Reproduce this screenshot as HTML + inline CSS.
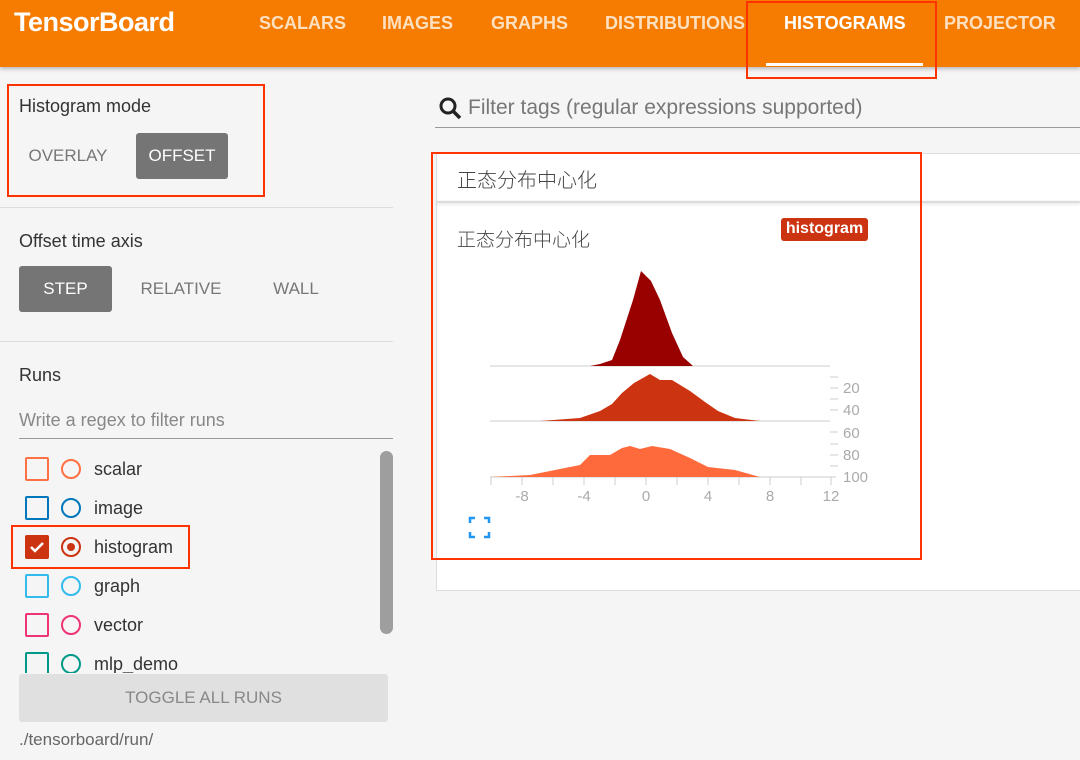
<!DOCTYPE html>
<html><head><meta charset="utf-8"><style>
*{margin:0;padding:0;box-sizing:border-box}
body{width:1080px;height:760px;background:#f5f5f5;font-family:"Liberation Sans","Noto Sans CJK SC",sans-serif;position:relative;overflow:hidden;color:#333}
.a{position:absolute;white-space:nowrap}
.hdr{left:0;top:0;width:1080px;height:67px;background:#f57c00;box-shadow:0 2px 4px rgba(0,0,0,.25)}
.nav{top:13px;font-size:18px;font-weight:bold;color:#fde0c0}
.red{position:absolute;border:2px solid #ff3300}
.line{position:absolute;height:1px;background:#ddd}
.btn{position:absolute;height:46px;border-radius:3px;font-size:17px;line-height:46px;text-align:center;color:#777}
.btn.on{background:#757575;color:#fff}
.run{position:absolute;left:25px;width:300px;height:24px;font-size:18px;color:#333}
.run .cb{position:absolute;left:0;top:0;width:24px;height:24px;border:2px solid;border-radius:2px}
.run .rd{position:absolute;left:36px;top:2px;width:20px;height:20px;border:2px solid;border-radius:50%}
.run span{position:absolute;left:69px;top:0;line-height:24px}
</style></head><body>
<div class="a hdr"></div>
<div class="a" style="left:14px;top:7px;font-size:27px;color:#fff;font-weight:bold;letter-spacing:-0.5px">TensorBoard</div>
<div class="a nav" style="left:259px">SCALARS</div>
<div class="a nav" style="left:382px">IMAGES</div>
<div class="a nav" style="left:491px">GRAPHS</div>
<div class="a nav" style="left:605px">DISTRIBUTIONS</div>
<div class="a nav" style="left:784px;color:#fff">HISTOGRAMS</div>
<div class="a nav" style="left:944px">PROJECTOR</div>
<div class="a" style="left:766px;top:63px;width:157px;height:3px;background:#fff"></div>
<div class="red" style="left:746px;top:1px;width:191px;height:78px"></div>

<div class="a" style="left:19px;top:96px;font-size:18px">Histogram mode</div>
<div class="btn" style="left:19px;top:133px;width:98px">OVERLAY</div>
<div class="btn on" style="left:136px;top:133px;width:92px">OFFSET</div>
<div class="red" style="left:7px;top:84px;width:258px;height:113px"></div>
<div class="line" style="left:0;top:207px;width:393px"></div>
<div class="a" style="left:19px;top:231px;font-size:18px">Offset time axis</div>
<div class="btn on" style="left:19px;top:266px;width:93px">STEP</div>
<div class="btn" style="left:132px;top:266px;width:98px">RELATIVE</div>
<div class="btn" style="left:260px;top:266px;width:72px">WALL</div>
<div class="line" style="left:0;top:341px;width:393px"></div>
<div class="a" style="left:19px;top:365px;font-size:18px">Runs</div>
<div class="a" style="left:19px;top:410px;font-size:18px;color:#888">Write a regex to filter runs</div>
<div class="a" style="left:19px;top:438px;width:374px;height:1px;background:#999"></div>

<div class="run" style="top:457px"><div class="cb" style="border-color:#ff7043"></div><div class="rd" style="border-color:#ff7043"></div><span>scalar</span></div>
<div class="run" style="top:496px"><div class="cb" style="border-color:#0077bb"></div><div class="rd" style="border-color:#0077bb"></div><span>image</span></div>
<div class="run" style="top:535px"><div class="cb" style="border-color:#cc3311;background:#cc3311"><svg width="20" height="20" viewBox="0 0 20 20" style="position:absolute;left:0;top:0"><path d="M4 10l4 4 8-8" stroke="#fff" stroke-width="2.5" fill="none"/></svg></div><div class="rd" style="border-color:#cc3311"><div style="position:absolute;left:4px;top:4px;width:8px;height:8px;border-radius:50%;background:#cc3311"></div></div><span>histogram</span></div>
<div class="run" style="top:574px"><div class="cb" style="border-color:#33bbee"></div><div class="rd" style="border-color:#33bbee"></div><span>graph</span></div>
<div class="run" style="top:613px"><div class="cb" style="border-color:#ee3377"></div><div class="rd" style="border-color:#ee3377"></div><span>vector</span></div>
<div class="run" style="top:652px;height:21px;overflow:hidden"><div class="cb" style="border-color:#009988;height:30px"></div><div class="rd" style="border-color:#009988"></div><span>mlp_demo</span></div>
<div class="red" style="left:11px;top:525px;width:179px;height:44px"></div>
<div class="a" style="left:380px;top:451px;width:13px;height:183px;border-radius:7px;background:#9e9e9e"></div>
<div class="a" style="left:19px;top:674px;width:369px;height:48px;background:#e0e0e0;border-radius:3px;font-size:17px;color:#888;text-align:center;line-height:48px">TOGGLE ALL RUNS</div>
<div class="a" style="left:19px;top:730px;font-size:17px;color:#666">./tensorboard/run/</div>

<svg class="a" style="left:437px;top:95px" width="28" height="28" viewBox="0 0 28 28"><circle cx="11" cy="11" r="7" stroke="#222" stroke-width="3" fill="none"/><path d="M16 16l7 7" stroke="#222" stroke-width="3.5"/></svg>
<div class="a" style="left:468px;top:96px;font-size:21px;color:#777">Filter tags (regular expressions supported)</div>
<div class="a" style="left:435px;top:127px;width:645px;height:1px;background:#999"></div>

<div class="a" style="left:436px;top:153px;width:644px;height:438px;background:#fff;border:1px solid #ddd;border-right:none"></div>
<div class="a" style="left:436px;top:201px;width:644px;height:2px;background:#ddd;box-shadow:0 1px 3px rgba(0,0,0,.15)"></div>
<div class="a" style="left:457px;top:164px;font-size:20px;color:#444;font-family:'Noto Sans CJK SC',sans-serif;font-weight:300">正态分布中心化</div>
<div class="a" style="left:457px;top:225px;font-size:19px;color:#444;font-family:'Noto Sans CJK SC',sans-serif;font-weight:300">正态分布中心化</div>
<div class="a" style="left:781px;top:218px;width:87px;height:23px;background:#cc3311;border-radius:3px;color:#fff;font-weight:bold;font-size:16px;text-align:center;line-height:22px">histogram</div>
<svg class="a" style="left:430px;top:250px" width="450" height="300" viewBox="430 250 450 300">
<g stroke="#ccc" stroke-width="1"><line x1="490" y1="366" x2="830" y2="366"/><line x1="490" y1="421" x2="830" y2="421"/><line x1="490" y1="477" x2="836" y2="477"/>
<line x1="491" y1="477" x2="491" y2="485"/><line x1="553" y1="477" x2="553" y2="485"/><line x1="615" y1="477" x2="615" y2="485"/><line x1="677" y1="477" x2="677" y2="485"/><line x1="739" y1="477" x2="739" y2="485"/><line x1="801" y1="477" x2="801" y2="485"/><line x1="522" y1="477" x2="522" y2="485"/><line x1="584" y1="477" x2="584" y2="485"/><line x1="646" y1="477" x2="646" y2="485"/><line x1="708" y1="477" x2="708" y2="485"/><line x1="770" y1="477" x2="770" y2="485"/><line x1="831" y1="477" x2="831" y2="485"/>
<line x1="830" y1="377" x2="838" y2="377"/><line x1="830" y1="388" x2="838" y2="388"/><line x1="830" y1="399" x2="838" y2="399"/><line x1="830" y1="410" x2="838" y2="410"/><line x1="830" y1="444" x2="838" y2="444"/><line x1="830" y1="455" x2="838" y2="455"/><line x1="830" y1="466" x2="838" y2="466"/><line x1="830" y1="432" x2="838" y2="432"/></g>
<path d="M590 366L600 364L612 360L620 340L633 300L641 271L651 281L660 300L672 333L683 357L693 366Z" fill="#990000"/>
<path d="M540 421L580 418L600 411L612 404L622 393L634 383L650 374L660 380L672 380L690 391L705 402L718 411L735 418L760 421Z" fill="#cc3311"/>
<path d="M490 477L530 475L560 469L580 465L590 455L610 455L622 448L630 446L640 449L652 446L670 449L690 458L708 467L735 470L760 477Z" fill="#ff6a3d"/>
<g fill="#aaa" font-size="15" font-family="Liberation Sans" text-anchor="middle"><text x="522" y="501">-8</text><text x="584" y="501">-4</text><text x="646" y="501">0</text><text x="708" y="501">4</text><text x="770" y="501">8</text><text x="831" y="501">12</text></g>
<g fill="#aaa" font-size="15" font-family="Liberation Sans"><text x="843" y="393">20</text><text x="843" y="415">40</text><text x="843" y="438">60</text><text x="843" y="460">80</text><text x="843" y="482">100</text></g>
<path d="M470 523v-5h5M484 518h5v5M489 532v5h-5M475 537h-5v-5" stroke="#2196f3" stroke-width="2.5" fill="none"/>
</svg>
<div class="red" style="left:431px;top:152px;width:491px;height:408px"></div>
</body></html>
